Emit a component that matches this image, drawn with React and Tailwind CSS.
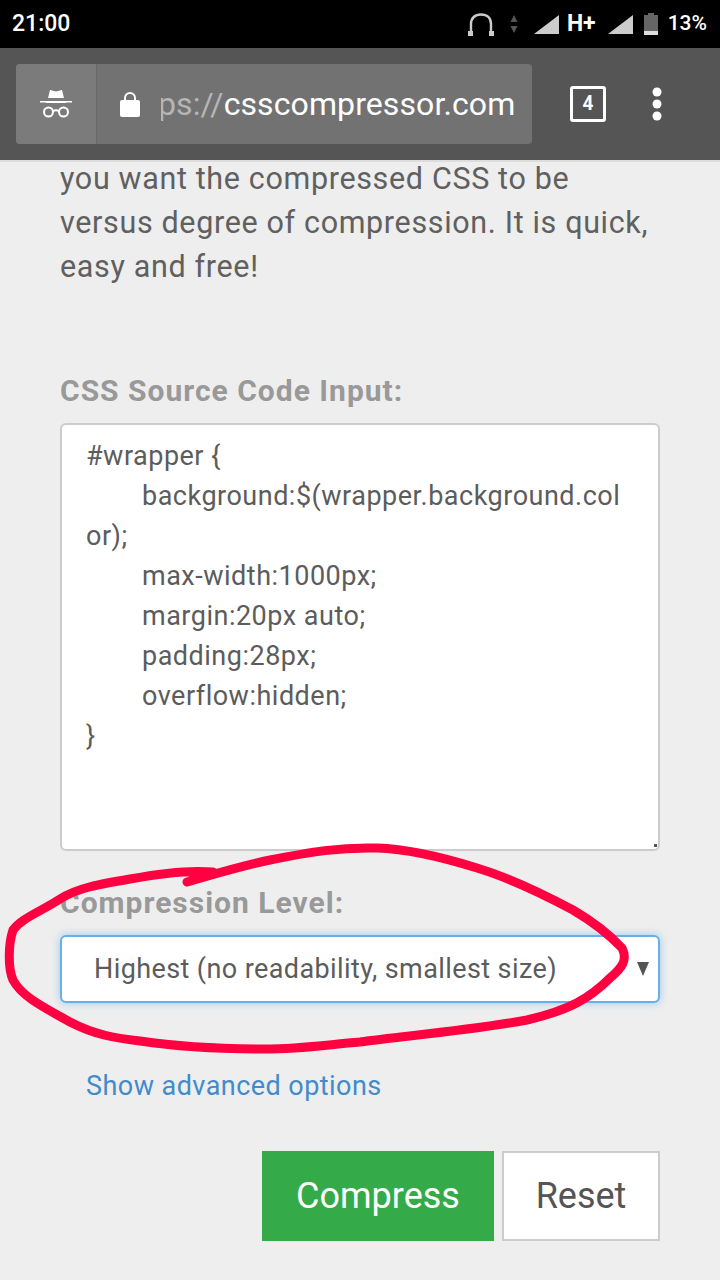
const css = `#wrapper {
	background:$(wrapper.background.color);
	max-width:1000px;
	margin:20px auto;
	padding:28px;
	overflow:hidden;
}`

function StatusBar() {
  return (
    <div className="h-12 bg-black flex items-center text-white pl-3 pr-[13px]">
      <span className="text-[23px] font-medium">21:00</span>
      <div className="ml-auto flex items-center">
        <svg width="26" height="23" viewBox="0 0 26 23" fill="none" stroke="#ccc" strokeWidth="2.4">
          <path d="M3 20V11C3 5 7 1.500 13 1.500S23 5 23 11v9" />
          <path d="M0 18h5v5H0zM21 18h5v5h-5z" fill="#ccc" stroke="none" />
        </svg>
        <svg className="ml-4" width="8" height="18" viewBox="0 0 8 18" fill="#555">
          <path d="M4 0l3.500 7h-7zM4 18L.5 11h7z" />
        </svg>
        <svg className="ml-4" width="25" height="19" viewBox="0 0 25 19" fill="#ccc"><path d="M0 19L25 0v19z" /></svg>
        <span className="ml-2 text-[23px] font-bold">H+</span>
        <svg className="ml-3" width="25" height="19" viewBox="0 0 25 19" fill="#ccc"><path d="M0 19L25 0v19z" /></svg>
        <svg className="ml-[11px]" width="14" height="22" viewBox="0 0 14 22">
          <path d="M4 0h6v2h4v20H0V2h4z" fill="#666" />
          <path d="M0 18h14v4H0z" fill="#ddd" />
        </svg>
        <span className="ml-[10px] text-[21px] font-medium">13%</span>
      </div>
    </div>
  )
}

function Toolbar() {
  return (
    <div className="h-28 bg-[#555] flex items-center pl-4 border-b-2 border-[#ddd] box-content -mb-0.5">
      <div className="w-[516px] h-20 bg-[#727272] rounded flex items-center overflow-hidden">
        <div className="w-[81px] h-20 shrink-0 bg-[#7b7b7b] border-r border-[#6a6a6a] flex items-center justify-center">
          <svg width="36" height="36" viewBox="0 0 36 36" fill="none">
            <path d="M10 12l2-8 6 1.500 6-1.500 2 8zM2 15h32v1.500H2z" fill="#fff" />
            <path d="M7 17h22l-3-2H10z" fill="#fff" />
            <circle cx="10.500" cy="26" r="4.500" stroke="#fff" strokeWidth="2" />
            <circle cx="25.500" cy="26" r="4.500" stroke="#fff" strokeWidth="2" />
            <path d="M15 25c2-1 4-1 6 0" stroke="#fff" strokeWidth="2" />
          </svg>
        </div>
        <svg className="ml-[23px] shrink-0" width="20" height="28" viewBox="0 0 20 28" fill="none">
          <path d="M5 11V8a5 5 0 0 1 10 0v3" stroke="#fff" strokeWidth="2" />
          <rect y="10" width="20" height="17" rx="2" fill="#fff" />
        </svg>
        <div className="ml-[21px] w-[356px] overflow-hidden whitespace-nowrap text-[32px] leading-10 tracking-[0.1px] text-white">
          <span className="text-[#b5b5b5] -ml-[3px] inline-block">ps://</span>csscompressor.com
        </div>
      </div>
      <div className="ml-[38px] w-9 h-9 border-[3px] border-white rounded-[3px] flex items-center justify-center text-white text-[21px] font-bold">
        <span className="scale-x-90">4</span>
      </div>
      <svg className="ml-[46px]" width="10" height="34" viewBox="0 0 10 34" fill="#fff">
        <circle cx="5" cy="5" r="4.500" />
        <circle cx="5" cy="17" r="4.500" />
        <circle cx="5" cy="29" r="4.500" />
      </svg>
    </div>
  )
}

export default function App() {
  return (
    <div className="relative w-[720px] h-[1280px] overflow-hidden bg-[#eee] font-['Roboto',sans-serif]">
      <StatusBar />
      <Toolbar />
      <div className="px-[60px]">
        <p className="text-[30.500px] leading-[44px] tracking-[0.65px] text-[#606060] -mt-[5px]">
          you want the compressed CSS to be<br />
          versus degree of compression. It is quick,<br />
          easy and free!
        </p>
        <h2 className="mt-[82px] text-[30px] leading-10 tracking-[1px] font-bold text-[#999]">CSS Source Code Input:</h2>
        <div className="relative mt-3">
          <textarea
            readOnly
            defaultValue={css}
            className="block w-[600px] h-[428px] resize-none bg-white border-2 border-[#ccc] rounded-md pl-[24px] pr-[34px] pt-[11px] text-[27px] leading-10 tracking-[0.5px] [tab-size:56px] break-all text-[#5c5c5c] outline-none"
          />
          <div className="absolute right-[3px] bottom-[4px] w-[3px] h-[3px] bg-[#555]" />
        </div>
        <h2 className="mt-8 text-[30px] leading-10 tracking-[1px] font-bold text-[#999]">Compression Level:</h2>
        <div className="relative mt-3">
          <select className="block w-[600px] h-[68px] appearance-none bg-white border-2 border-[#66afe9] rounded-md pl-[32px] text-[27px] tracking-[0.4px] text-[#5c5c5c] outline-none shadow-[0_0_8px_rgba(102,175,233,0.6)]">
            <option>Highest (no readability, smallest size)</option>
          </select>
          <svg className="absolute right-[11px] top-[27px]" width="12" height="14" viewBox="0 0 12 14" fill="#555"><path d="M0 0h12L6 14z" /></svg>
        </div>
        <a className="block mt-[63px] ml-[26px] text-[27px] leading-10 tracking-[0.45px] text-[#428bca]">Show advanced options</a>
        <div className="mt-[45px] flex justify-end gap-2">
          <button className="w-[232px] h-[90px] bg-[#34ab48] text-white text-[36px]">Compress</button>
          <button className="w-[158px] h-[90px] bg-white border-2 border-[#ccc] text-[#555] text-[36px]">Reset</button>
        </div>
      </div>
      <svg className="absolute inset-0 pointer-events-none" width="720" height="1280" viewBox="0 0 720 1280" fill="none" stroke="#ff0040" strokeWidth="9" strokeLinecap="round" strokeLinejoin="round">
        <path d="M213 872C190 870 167 872 130 879C100 884 77 888 60 899C40 912 22 918 13 930C8 945 8 968 13 980C22 997 45 1008 70 1022C95 1035 115 1038 140 1041C180 1047 215 1049 265 1049C300 1049 325 1045 360 1042C400 1036 460 1032 527 1020C570 1010 590 998 610 978C622 968 628 960 622 948C605 930 590 920 573 910C545 895 510 878 477 868C445 858 410 849 377 848C340 847 310 852 270 860C240 866 215 874 187 882" />
      </svg>
    </div>
  )
}
